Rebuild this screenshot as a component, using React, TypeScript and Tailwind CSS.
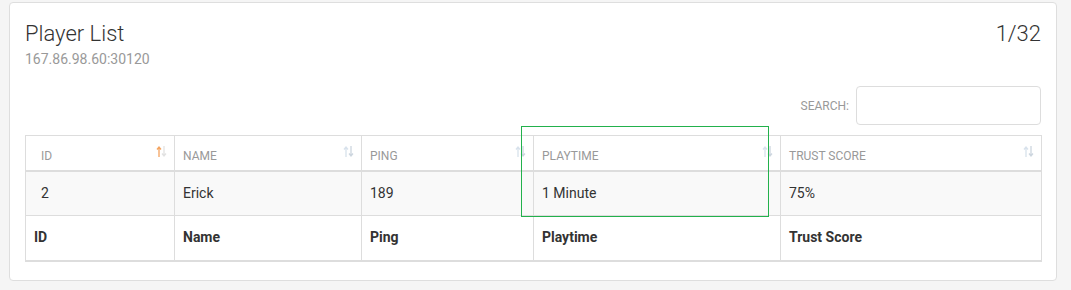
import React from "react";

interface Column {
  key: string;
  label: string;
  width: number;
  active?: boolean;
}

const columns: Column[] = [
  { key: "id", label: "ID", width: 149, active: true },
  { key: "name", label: "Name", width: 187 },
  { key: "ping", label: "Ping", width: 172 },
  { key: "playtime", label: "Playtime", width: 247 },
  { key: "trust", label: "Trust Score", width: 261 },
];

const row = ["2", "Erick", "189", "1 Minute", "75%"];

function SortIcon({ active }: { active?: boolean }) {
  return (
    <svg width="11" height="13" viewBox="0 0 11 13" className="absolute right-[7px] top-[9px]">
      <path d="M3 12V2M1 4.5l2-2.5L5 4.5" fill="none" stroke={active ? "#f4a460" : "#d8e2ec"} strokeWidth="1.3" />
      <path d="M8 1v10M6 8.5l2 2.5L10 8.5" fill="none" stroke={active ? "#e2e2e2" : "#cdd6df"} strokeWidth="1.3" />
    </svg>
  );
}

export default function App() {
  return (
    <div className="min-h-[290px] bg-[#f5f5f5] pl-[9px] pr-[14px] pt-[2px] font-['Roboto',sans-serif] text-[#333]">
      <div className="relative h-[279px] rounded-[4px] border border-[#dedede] bg-white px-[15px] pt-[17px]">
        <div className="flex items-start justify-between">
          <div>
            <h2 className="text-[22px] font-light leading-[28px] text-[#333]">Player List</h2>
            <p className="mt-[3px] text-[14px] leading-[16px] text-[#999]">167.86.98.60:30120</p>
          </div>
          <span className="text-[22px] font-light leading-[28px] text-[#333]">1/32</span>
        </div>

        <div className="mt-[19px] flex items-center justify-end gap-[7px]">
          <label className="text-[12px] uppercase text-[#999]">Search:</label>
          <input className="h-[39px] w-[185px] rounded-[4px] border border-[#ddd] outline-none" />
        </div>

        <table className="mt-[10px] w-full table-fixed border-collapse border border-[#ddd] text-[14px]">
          <colgroup>
            {columns.map((c) => (
              <col key={c.key} style={{ width: c.width }} />
            ))}
          </colgroup>
          <thead>
            <tr className="h-[35px] border-b-2 border-[#ddd]">
              {columns.map((c, i) => (
                <th
                  key={c.key}
                  className={`relative border-r border-[#ddd] pt-[6px] text-left text-[12px] font-normal uppercase text-[#999] ${i === 0 ? "pl-[15px]" : "pl-[8px]"}`}
                >
                  {c.label}
                  <SortIcon active={c.active} />
                </th>
              ))}
            </tr>
          </thead>
          <tbody>
            <tr className="h-[45px] bg-[#f9f9f9]">
              {row.map((v, i) => (
                <td key={i} className={`border-r border-[#ddd] text-[14px] text-[#333] ${i === 0 ? "pl-[15px]" : "pl-[8px]"}`}>
                  {v}
                </td>
              ))}
            </tr>
          </tbody>
          <tfoot>
            <tr className="h-[45px] border-t border-b-2 border-[#ddd]">
              {columns.map((c) => (
                <th key={c.key} className="border-r border-[#ddd] pl-[8px] text-left text-[14px] font-bold text-[#333]">
                  {c.label}
                </th>
              ))}
            </tr>
          </tfoot>
        </table>

        <div className="absolute left-[511px] top-[123px] h-[91px] w-[248px] border border-[#22b14c]" />
      </div>
    </div>
  );
}
